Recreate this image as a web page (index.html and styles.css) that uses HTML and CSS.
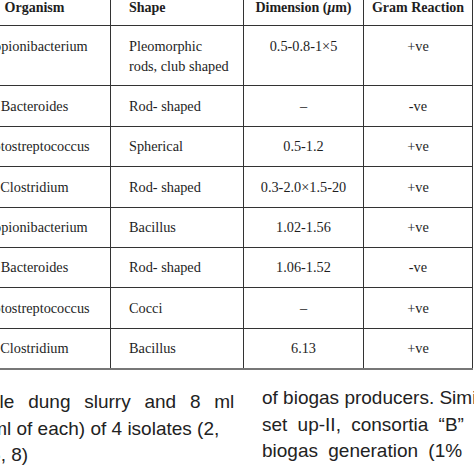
FILE: index.html
```html
<!DOCTYPE html>
<html>
<head>
<meta charset="utf-8">
<link rel="stylesheet" href="styles.css">
</head>
<body>
<table class="data">
  <colgroup>
    <col class="c1"><col class="c2"><col class="c3"><col class="c4">
  </colgroup>
  <thead>
    <tr>
      <th class="ctr">Organism</th>
      <th class="lft">Shape</th>
      <th class="ctr">Dimension (<i>μ</i>m)</th>
      <th class="ctr">Gram Reaction</th>
    </tr>
  </thead>
  <tbody>
    <tr><td class="ctr">Propionibacterium</td><td class="lft">Pleomorphic<br>rods, club shaped</td><td class="ctr">0.5-0.8-1×5</td><td class="ctr">+ve</td></tr>
    <tr><td class="ctr">Bacteroides</td><td class="lft">Rod- shaped</td><td class="ctr">–</td><td class="ctr">-ve</td></tr>
    <tr><td class="ctr">Peptostreptococcus</td><td class="lft">Spherical</td><td class="ctr">0.5-1.2</td><td class="ctr">+ve</td></tr>
    <tr><td class="ctr">Clostridium</td><td class="lft">Rod- shaped</td><td class="ctr">0.3-2.0×1.5-20</td><td class="ctr">+ve</td></tr>
    <tr><td class="ctr">Propionibacterium</td><td class="lft">Bacillus</td><td class="ctr">1.02-1.56</td><td class="ctr">+ve</td></tr>
    <tr><td class="ctr">Bacteroides</td><td class="lft">Rod- shaped</td><td class="ctr">1.06-1.52</td><td class="ctr">-ve</td></tr>
    <tr><td class="ctr">Peptostreptococcus</td><td class="lft">Cocci</td><td class="ctr">–</td><td class="ctr">+ve</td></tr>
    <tr class="last"><td class="ctr">Clostridium</td><td class="lft">Bacillus</td><td class="ctr">6.13</td><td class="ctr">+ve</td></tr>
  </tbody>
</table>
<div class="prose">
  <div class="col left">
    <div class="ln wide">cattle dung slurry and 8 ml</div>
    <div class="ln">(2 ml of each) of 4 isolates (2,</div>
    <div class="ln">1, 5, 8)</div>
  </div>
  <div class="col right">
    <div class="ln">of biogas producers. Similarly</div>
    <div class="ln spread">set up-II, consortia “B”</div>
    <div class="ln spread">biogas generation (1%</div>
  </div>
</div>
</body>
</html>
```
FILE: styles.css
```css
html, body {
  margin: 0;
  padding: 0;
  background: #fff;
}
body {
  width: 474px;
  height: 474px;
  overflow: hidden;
}
.data {
  border-collapse: collapse;
  table-layout: fixed;
  width: 514px;
  margin: -13px 0 0 -42px;
  font-family: "Liberation Serif", "Times New Roman", serif;
  font-size: 14px;
  line-height: 20px;
  color: #1e1e1e;
}
.c1 { width: 152px; }
.c2 { width: 133px; }
.c3 { width: 120px; }
.c4 { width: 109px; }
.data th, .data td {
  border: 1px solid #333;
  vertical-align: top;
  white-space: nowrap;
}
.data th {
  font-weight: bold;
  padding: 9.5px 0 7.5px;
}
.data td {
  padding: 9.5px 0 9.9px;
  font-weight: normal;
  font-size: 14.3px;
}
.data .ctr { text-align: center; }
.data .lft { text-align: left; padding-left: 18px; }
.data .last td { border-bottom: 2px solid #777; }
.prose {
  display: grid;
  grid-template-columns: 257px 300px;
  column-gap: 36px;
  margin: 19px 0 0 -31px;
  font-family: "Liberation Sans", Arial, sans-serif;
  font-size: 19px;
  line-height: 26.5px;
  color: #222;
}
.col.right { margin-top: -4px; }
.ln { white-space: nowrap; }
.ln.wide { word-spacing: 8.5px; }
.ln.spread { word-spacing: 5px; }
```
